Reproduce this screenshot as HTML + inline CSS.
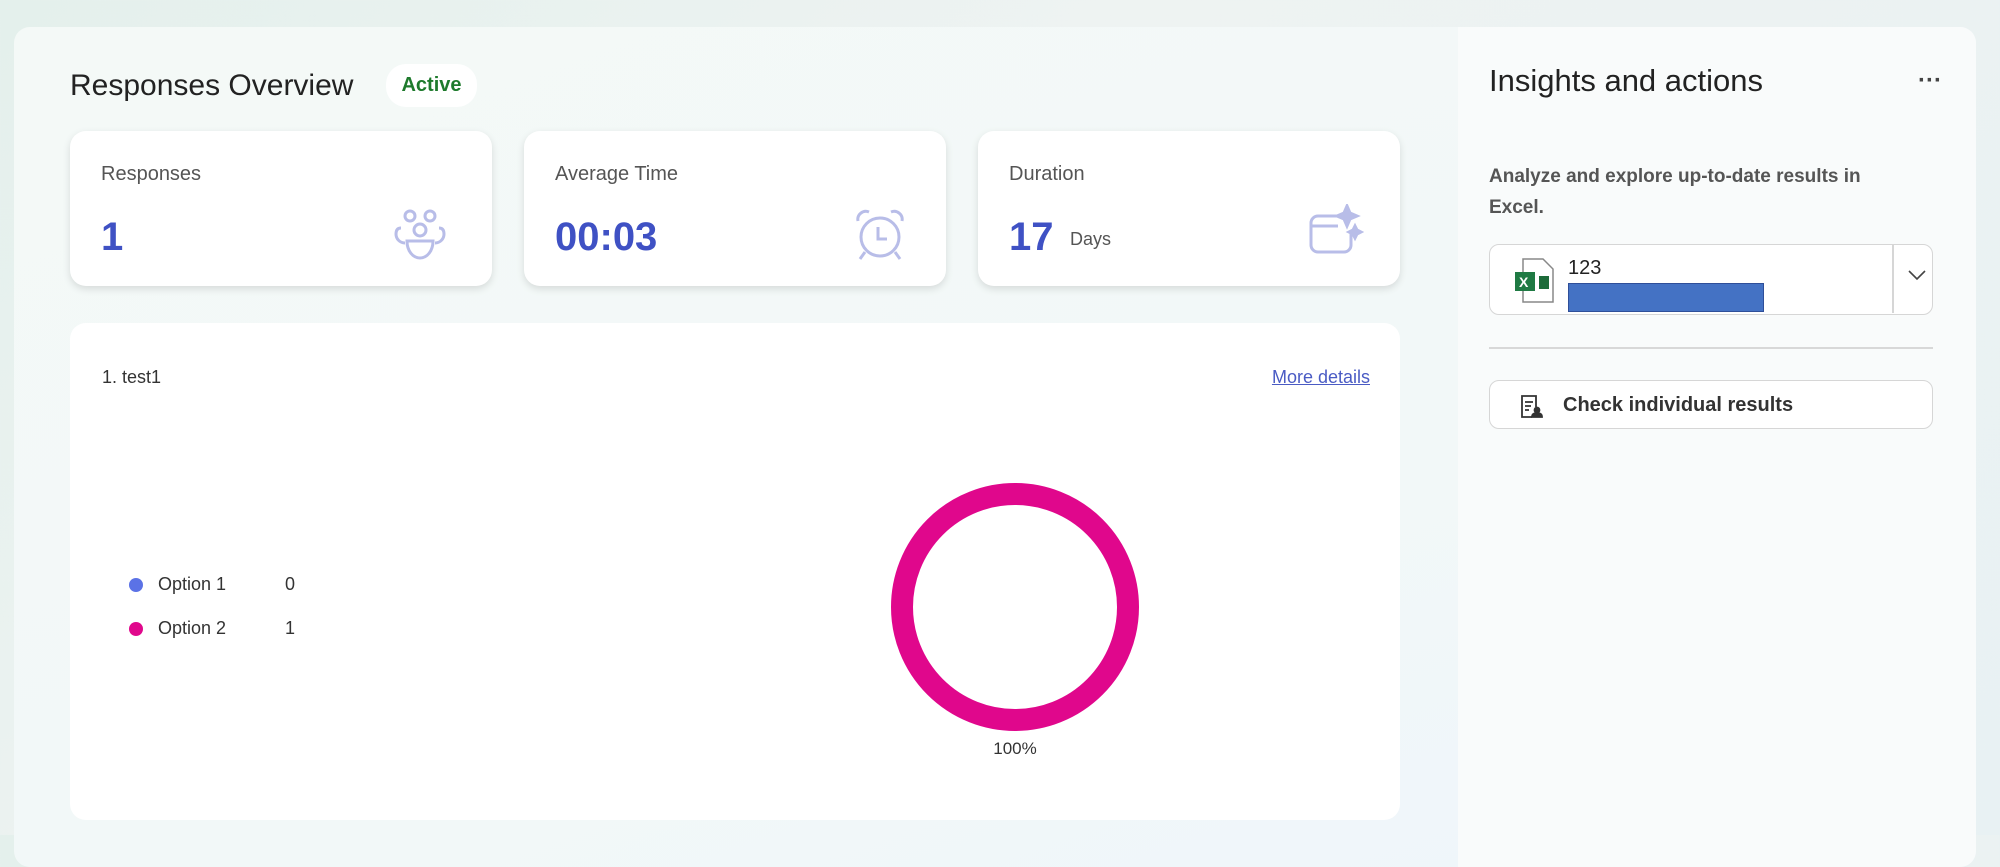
<!DOCTYPE html>
<html><head><meta charset="utf-8"><style>
*{margin:0;padding:0;box-sizing:border-box}
body{width:2000px;height:835px;overflow:hidden;font-family:"Liberation Sans",sans-serif;background:linear-gradient(135deg,#e4f0ec 0%,#eef3f2 40%,#e8f1f3 100%);position:relative}
.main{position:absolute;left:14px;top:27px;width:1962px;height:840px;border-radius:16px;background:linear-gradient(160deg,#f4f9f7,#f2f8f8 60%,#eef5fb);overflow:hidden}
.right{position:absolute;left:1444px;top:0;right:0;bottom:0;background:#f9fbfb}
.abs{position:absolute}
.card{position:absolute;background:#fff;border-radius:16px;box-shadow:0 3px 8px rgba(0,0,0,.12)}
.lbl{position:absolute;left:31px;top:32px;font-size:20px;color:#555}
.val{position:absolute;left:31px;top:84px;font-size:40px;color:#3f51c4;font-weight:bold}
</style></head><body>
<div class="main">
 <div class="abs" style="left:56px;top:42px;font-size:30px;color:#222">Responses Overview</div>
 <div class="abs" style="left:372px;top:37px;width:91px;height:43px;border-radius:20px;background:#fff;color:#1e7a2c;font-weight:bold;font-size:20px;line-height:43px;text-align:center">Active</div>

 <div class="card" style="left:56px;top:104px;width:422px;height:155px">
  <div class="lbl">Responses</div><div class="val">1</div>
  <svg class="abs" style="left:323px;top:77px" width="54" height="54" viewBox="0 0 54 54" fill="none" stroke="#b8bde8" stroke-width="3"><circle cx="17" cy="8" r="5"/><circle cx="37" cy="8" r="5"/><circle cx="27" cy="22" r="6"/><path d="M8 20c-4 0-5 3-5 6 0 5 4 9 9 9M46 20c4 0 5 3 5 6 0 5-4 9-9 9M14 33h26c0 10-6 17-13 17s-13-7-13-17z"/></svg>
 </div>
 <div class="card" style="left:510px;top:104px;width:422px;height:155px">
  <div class="lbl">Average Time</div><div class="val">00:03</div>
  <svg class="abs" style="left:329px;top:77px" width="54" height="54" viewBox="0 0 54 54" fill="none" stroke="#b8bde8" stroke-width="3"><circle cx="27" cy="29" r="19"/><path d="M25 19v12h9M5 13a8 8 0 0 1 11-9M49 13a8 8 0 0 0-11-9M12 44l-5 7M42 44l5 7"/></svg>
 </div>
 <div class="card" style="left:964px;top:104px;width:422px;height:155px">
  <div class="lbl">Duration</div><div class="val">17</div>
  <div class="abs" style="left:92px;top:98px;font-size:18px;color:#555">Days</div>
  <svg class="abs" style="left:330px;top:73px" width="56" height="56" viewBox="0 0 56 56" fill="none" stroke="#b8bde8" stroke-width="3"><path d="M30 12H10a7 7 0 0 0-7 7v22a7 7 0 0 0 7 7h26a7 7 0 0 0 7-7V30M3 22h27"/><path d="M39 2l3 7 7 3-7 3-3 7-3-7-7-3 7-3z" fill="#b8bde8"/><path d="M47 22l2 4 4 2-4 2-2 4-2-4-4-2 4-2z" fill="#b8bde8"/></svg>
 </div>

 <div class="card" style="left:56px;top:296px;width:1330px;height:497px;box-shadow:none">
  <div class="abs" style="left:32px;top:44px;font-size:18px;color:#333">1. test1</div>
  <div class="abs" style="right:30px;top:44px;font-size:18px;color:#4a5bc4;text-decoration:underline">More details</div>
  <div class="abs" style="left:59px;top:255px;width:14px;height:14px;border-radius:50%;background:#5b72e6"></div>
  <div class="abs" style="left:88px;top:251px;font-size:18px;color:#333">Option 1</div>
  <div class="abs" style="left:215px;top:251px;font-size:18px;color:#333">0</div>
  <div class="abs" style="left:59px;top:299px;width:14px;height:14px;border-radius:50%;background:#e0088c"></div>
  <div class="abs" style="left:88px;top:295px;font-size:18px;color:#333">Option 2</div>
  <div class="abs" style="left:215px;top:295px;font-size:18px;color:#333">1</div>
  <div class="abs" style="left:821px;top:160px;width:248px;height:248px;border-radius:50%;border:22px solid #e0078c"></div>
  <div class="abs" style="left:900px;top:416px;width:90px;text-align:center;font-size:17px;color:#333">100%</div>
 </div>

 <div class="right">
  <div class="abs" style="left:31px;top:36px;font-size:31px;color:#222">Insights and actions</div>
  <div class="abs" style="left:460px;top:40px;font-size:24px;color:#444;font-weight:bold">···</div>
  <div class="abs" style="left:31px;top:134px;font-size:19px;line-height:31px;color:#555;font-weight:bold;width:430px">Analyze and explore up-to-date results in Excel.</div>
  <div class="abs" style="left:31px;top:217px;width:444px;height:71px;border:1.5px solid #d6d6d6;border-radius:10px;background:#fff">
   <svg class="abs" style="left:25px;top:13px" width="40" height="46" viewBox="0 0 40 46"><path d="M8 1h20l10 10v33H8z" fill="#fff" stroke="#888" stroke-width="1.5"/><rect x="24" y="18" width="10" height="13" fill="#1d6b3a"/><rect x="0" y="14" width="20" height="19" fill="#1f7a43"/><text x="4" y="29" font-size="14" fill="#fff" font-family="Liberation Sans" font-weight="bold">X</text></svg>
   <div class="abs" style="left:78px;top:12px;font-size:20px;color:#222">123</div>
   <div class="abs" style="left:78px;top:38px;width:196px;height:29px;background:#4472c4;border:1px solid #2f4f99"></div>
   <div class="abs" style="left:402px;top:0;width:1.5px;height:68px;background:#d6d6d6"></div>
   <svg class="abs" style="left:418px;top:25px" width="18" height="12" viewBox="0 0 18 12" fill="none" stroke="#444" stroke-width="1.6"><path d="M1 1l8 8 8-8"/></svg>
  </div>
  <div class="abs" style="left:31px;top:320px;width:444px;height:1.5px;background:#d8d8d8"></div>
  <div class="abs" style="left:31px;top:353px;width:444px;height:49px;border:1.5px solid #d6d6d6;border-radius:10px;background:#fff">
   <svg class="abs" style="left:29px;top:12px" width="24" height="26" viewBox="0 0 24 26" fill="none" stroke="#333" stroke-width="1.8"><path d="M13 24H3V3h14v11M6 9h8M6 13h6M6 17h4"/><circle cx="18" cy="17" r="2.5" fill="#333"/><path d="M13 24c0-3 2-4 5-4s5 1 5 4z" fill="#333"/></svg>
   <div class="abs" style="left:73px;top:13px;font-size:20px;font-weight:bold;color:#333">Check individual results</div>
  </div>
 </div>
</div>
</body></html>
